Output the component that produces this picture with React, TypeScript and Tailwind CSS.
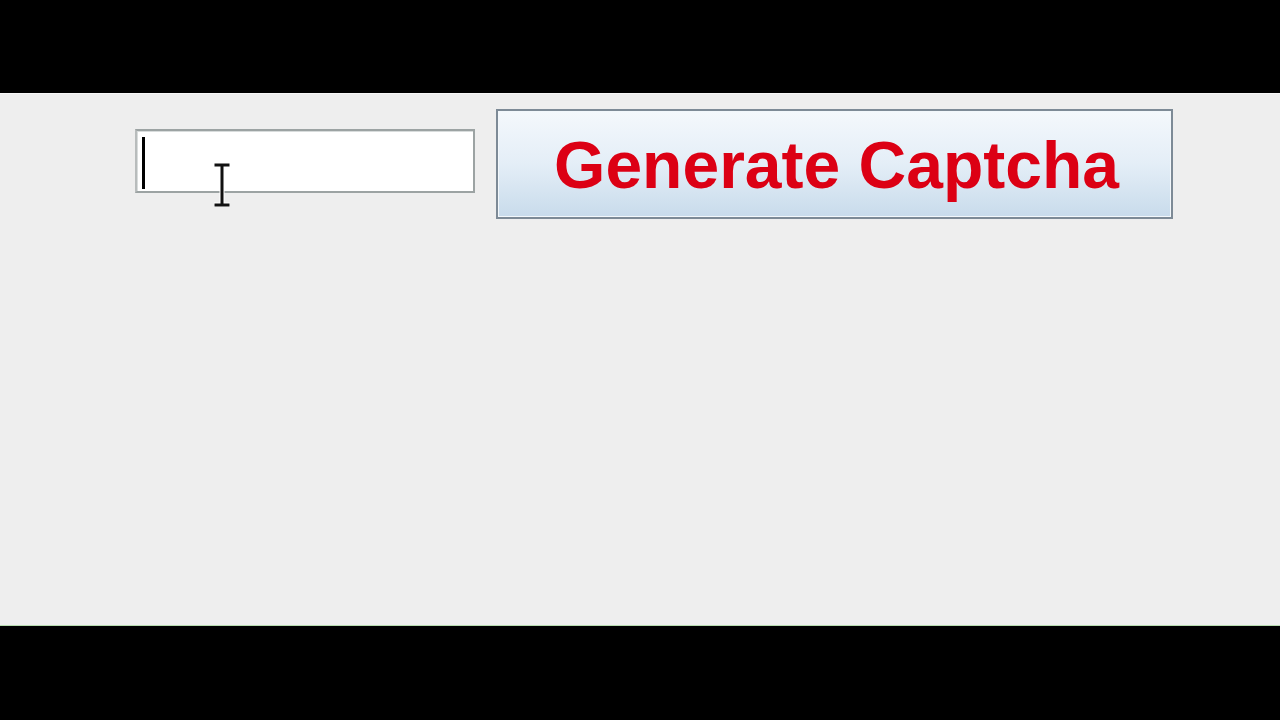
export default function App() {
  return (
    <div className="w-[1280px] h-[720px] flex flex-col bg-black" style={{ fontFamily: '"Liberation Sans", Arial, sans-serif' }}>
      <div className="h-[93px] bg-black" />
      <div className="h-[533px] bg-[#eeeeee] border-t border-[#f8f8f8] border-b border-b-[#b8dcb0] flex items-start pl-[135px] pt-[15px] gap-[21px]">
        {/* text field */}
        <div className="relative mt-[20px] w-[340px] h-[64px] bg-white border-2 border-[#9ca3a3] border-l-[#b8bcbc] shadow-[inset_1px_1px_0_#d8dcdc]">
          <div className="absolute left-[5px] top-[6px] w-[3px] h-[52px] bg-black" />
          {/* I-beam pointer */}
          <svg className="absolute left-[77px] top-[32px]" width="16" height="44" viewBox="0 0 16 44">
            <path d="M2 2h12M8 2v40M2 42h12" stroke="#fff" strokeWidth="5" fill="none" strokeLinecap="square" />
            <path d="M2 2h12M8 2v40M2 42h12" stroke="#111" strokeWidth="3" fill="none" strokeLinecap="square" />
          </svg>
        </div>
        {/* button */}
        <button className="w-[677px] h-[110px] pl-[4px] pt-[2px] border-2 border-[#7d8a96] bg-gradient-to-b from-[#f4f8fc] via-[#e4eef7] to-[#c8dbeb] shadow-[inset_0_0_0_1px_#f2f7fb] flex items-center justify-center">
          <span className="text-[66px] leading-none font-bold text-[#dc0014]">Generate Captcha</span>
        </button>
      </div>
      <div className="flex-1 bg-black" />
    </div>
  )
}
